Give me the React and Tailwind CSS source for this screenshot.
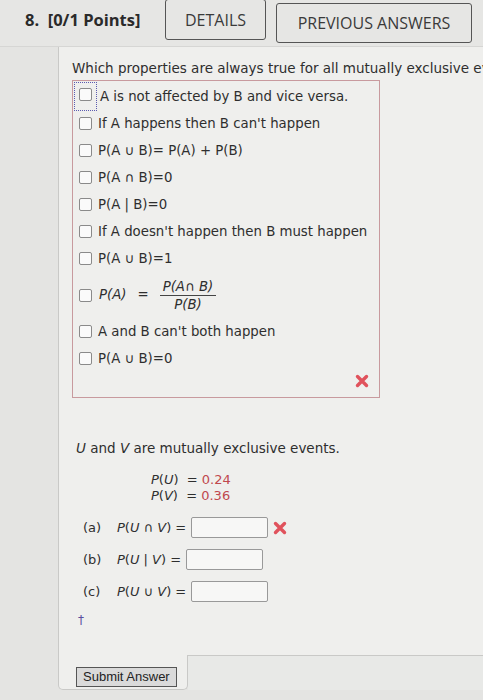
import React from "react";

function Box() {
	return <span className="inline-block w-[13px] h-[13px] border border-[#8a8a8a] rounded-[2px] bg-[#fafafa] shrink-0" />;
}

function RedX({ className = "" }) {
	return (
		<svg viewBox="0 0 14 14" className={"w-[14px] h-[14px] " + className}>
			<path d="M2.5 2.5 L11.5 11.5 M11.5 2.5 L2.5 11.5" stroke="#e0525c" strokeWidth="3.4" strokeLinecap="round" />
		</svg>
	);
}

const options = [
	"A is not affected by B and vice versa.",
	"If A happens then B can't happen",
	"P(A \u222A B)= P(A) + P(B)",
	"P(A \u2229 B)=0",
	"P(A | B)=0",
	"If A doesn't happen then B must happen",
	"P(A \u222A B)=1",
	"FRACTION",
	"A and B can't both happen",
	"P(A \u222A B)=0",
];

export default function App() {
	return (
		<div className="w-[483px] h-[700px] overflow-hidden bg-[#e4e4e2] text-[#2e2e2e]" style={{ fontFamily: '"DejaVu Sans", Verdana, sans-serif' }}>
			{/* header */}
			<div className="h-[47px] flex items-start border-b border-[#d6d6d4] bg-[#e6e6e4]" style={{ fontFamily: '"Open Sans", sans-serif' }}>
				<div className="pl-[25px] pt-[8px] text-[16.5px] font-bold text-[#2a2a2a] w-[165px] shrink-0">8.&nbsp; [0/1 Points]</div>
				<div className="mt-[-1px] w-[101px] h-[41px] border border-[#555] rounded-[3px] flex items-center justify-center text-[16px] text-[#3a3a3a] shrink-0">DETAILS</div>
				<div className="ml-[10px] mt-[3px] w-[196px] h-[40px] border border-[#555] rounded-[3px] flex items-center justify-center text-[16px] text-[#3a3a3a] shrink-0">PREVIOUS ANSWERS</div>
			</div>

			<div className="flex">
				<div className="w-[58px] shrink-0" />
				<div className="flex-1 flex flex-col">
					{/* main panel */}
					<div className="h-[608px] border-l border-[#c9c9c7] bg-[#efefed] pl-[13px] pt-[12px]">
						<div className="text-[13.5px] whitespace-nowrap leading-[18px]">Which properties are always true for all mutually exclusive events?</div>
						<div className="mt-[3px] w-[308px] h-[318px] border border-[#c89a9e] flex flex-col pt-[2px] relative">
							{options.map((o, i) =>
								o === "FRACTION" ? (
									<div key={i} className="h-[46px] flex items-center pl-[6px] gap-[7px] text-[13.3px]">
										<Box />
										<span className="italic">P(A)</span>
										<span className="mx-[4px]">=</span>
										<span className="inline-flex flex-col items-center italic leading-[17px]">
											<span className="px-[3px]">P(A{"\u2229"} B)</span>
											<span className="self-stretch border-t border-[#444]" />
											<span>P(B)</span>
										</span>
									</div>
								) : (
									<div key={i} className="h-[27px] flex items-center pl-[6px] gap-[6px] text-[13.3px] whitespace-nowrap">
										{i === 0 ? (
											<span className="ml-[-5px] mr-[-3px] p-[4px] border border-dotted border-[#5b5bb0]">
												<Box />
											</span>
										) : (
											<Box />
										)}
										<span>{o}</span>
									</div>
								)
							)}
							<RedX className="absolute right-[10px] bottom-[9px]" />
						</div>

						<div className="mt-[40px] pl-[4px] text-[13.5px]">
							<i>U</i> and <i>V</i> are mutually exclusive events.
						</div>
						<div className="mt-[14px] pl-[79px] text-[13px] leading-[16px]">
							<div>
								<i>P</i>(<i>U</i>) &nbsp;= <span className="text-[#c0484e]">0.24</span>
							</div>
							<div>
								<i>P</i>(<i>V</i>) &nbsp;= <span className="text-[#c0484e]">0.36</span>
							</div>
						</div>
						<div className="mt-[13px] pl-[11px] text-[13px] flex flex-col gap-[11px]">
							<div className="flex items-center">
								<span className="w-[34px]">(a)</span>
								<span>
									<i>P</i>(<i>U</i> {"\u2229"} <i>V</i>) =
								</span>
								<span className="ml-[5px] w-[77px] h-[21px] border border-[#999] rounded-[2px] bg-[#f7f7f6]" />
								<RedX className="ml-[5px]" />
							</div>
							<div className="flex items-center">
								<span className="w-[34px]">(b)</span>
								<span>
									<i>P</i>(<i>U</i> | <i>V</i>) =
								</span>
								<span className="ml-[5px] w-[77px] h-[21px] border border-[#999] rounded-[2px] bg-[#f7f7f6]" />
							</div>
							<div className="flex items-center">
								<span className="w-[34px]">(c)</span>
								<span>
									<i>P</i>(<i>U</i> {"\u222A"} <i>V</i>) =
								</span>
								<span className="ml-[5px] w-[77px] h-[21px] border border-[#999] rounded-[2px] bg-[#f7f7f6]" />
							</div>
						</div>
						<div className="mt-[9px] pl-[6px] text-[12px] text-[#5a4fa0]">{"\u2020"}</div>
					</div>
					{/* bottom row */}
					<div className="flex h-[35px]">
						<div className="w-[130px] shrink-0 border-l border-r border-b border-[#c9c9c7] rounded-b-[5px] bg-[#efefed] pl-[17px] pt-[9px]">
							<button className="h-[20px] px-[6px] border border-[#555] bg-[#dadada] text-[13px] text-[#222] leading-[18px]" style={{ fontFamily: '"Liberation Sans", Arial, sans-serif' }}>
								Submit Answer
							</button>
						</div>
						<div className="flex-1 border-t border-[#c9c9c7] bg-[#e8e9e7]" />
					</div>
				</div>
			</div>
		</div>
	);
}
